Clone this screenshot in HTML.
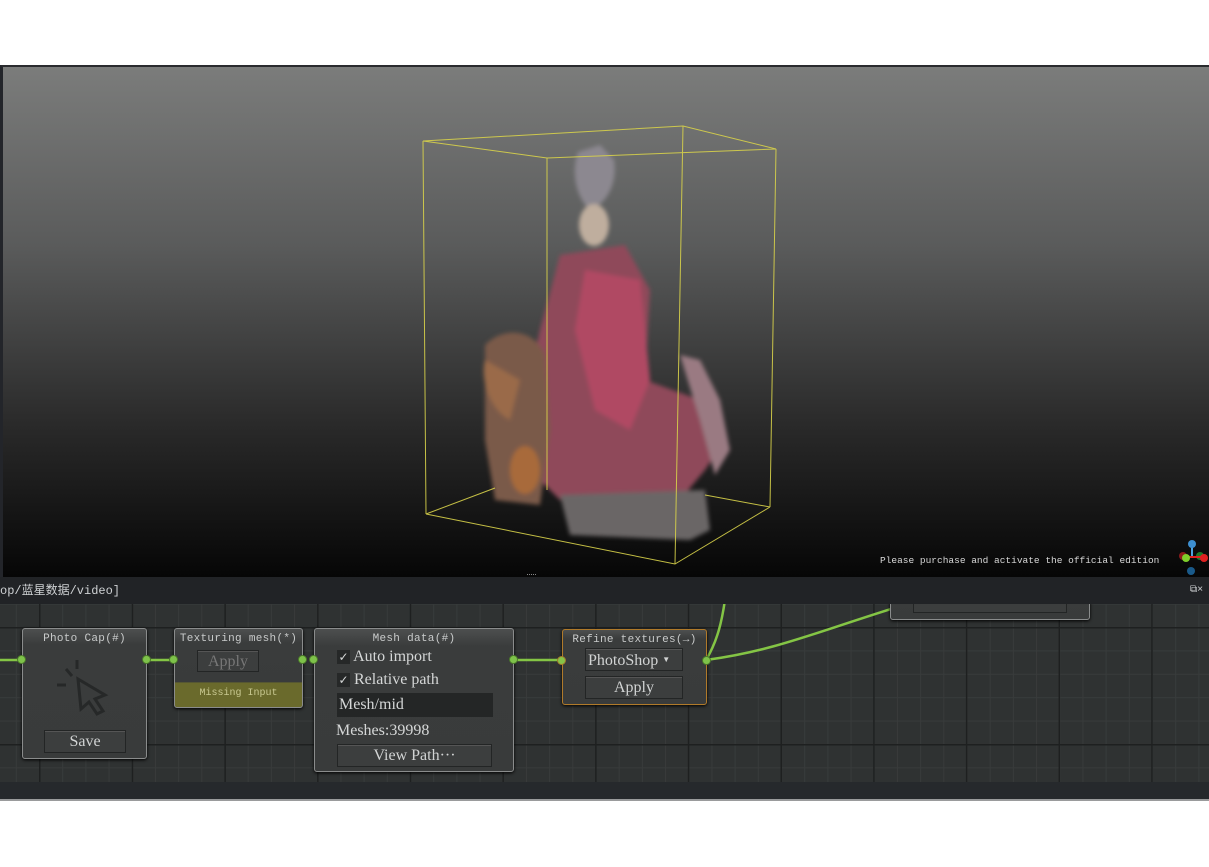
<!DOCTYPE html>
<html><head><meta charset="utf-8"><style>
*{margin:0;padding:0;box-sizing:border-box}
body{width:1209px;height:867px;background:#fff;position:relative;overflow:hidden;font-family:"Liberation Mono","Noto Sans CJK SC",monospace}
#vp{position:absolute;left:0;top:65px;width:1209px;height:512px;background:linear-gradient(#7b7c7b 0%,#5a5b5b 35%,#2a2a2a 70%,#060606 100%);border-top:2px solid #2a2b2e;border-left:3px solid #23252a}
#grid{position:absolute;left:0;top:604px;width:1209px;height:178px;background-color:#2f3232;
background-image:linear-gradient(90deg,#1e2020 1.5px,transparent 1.5px),linear-gradient(#1e2020 1.5px,transparent 1.5px),linear-gradient(90deg,#383b3b 1px,transparent 1px),linear-gradient(#383b3b 1px,transparent 1px);
background-size:92.7px 117px,92.7px 117px,23.2px 23.4px,23.2px 23.4px;background-position:39px 23px,39px 23px,39px 23px,39px 23px}
#bot{position:absolute;left:0;top:782px;width:1209px;height:19px;background:#26292c;border-bottom:2px solid #9a9b9c}
.node{position:absolute;background:linear-gradient(#4d4f4f,#3a3c3c 12%,#393b3b);border:1px solid #8a8c8c;border-radius:3px;box-shadow:0 1px 3px #000;color:#c9cbcb}
.t{font-size:11px;text-align:center;letter-spacing:0.3px;margin-top:4px;white-space:nowrap}
.btn{position:absolute;background:#3c3e3e;border:1px solid #232525;box-shadow:inset 0 1px 0 #555;color:#d2d4d4;font-family:"Liberation Serif",serif;text-align:center;white-space:nowrap}
.dot{position:absolute;width:9px;height:9px;border-radius:50%;background:#7ec24a;border:1px solid #4b7a2a}
.ser{font-family:"Liberation Serif",serif;color:#d5d7d7;position:absolute;font-size:16px;white-space:nowrap}
</style></head><body>
<div id="vp"></div>
<svg style="position:absolute;left:0;top:0" width="1209" height="580">
<defs><filter id="b"><feGaussianBlur stdDeviation="2"/></filter></defs>
<g filter="url(#b)">
<path d="M578,152 C570,175 578,200 590,210 C605,205 618,185 614,160 L600,145 Z" fill="#8c8890"/>
<ellipse cx="594" cy="225" rx="15" ry="21" fill="#bfae9e"/>
<path d="M560,255 L625,245 L650,290 L645,380 L700,400 L725,440 L705,470 L680,500 L620,505 L560,500 L530,470 L520,420 L540,330 Z" fill="#8f4a5a"/>
<path d="M585,270 L640,280 L650,380 L630,430 L595,410 L575,330 Z" fill="#b04863"/>
<path d="M485,345 C505,325 535,330 545,355 L550,430 L540,505 L495,500 L485,440 Z" fill="#7a5a48"/>
<path d="M485,360 C480,380 490,410 510,420 L520,380 Z" fill="#9a6a4a"/>
<ellipse cx="525" cy="470" rx="15" ry="24" fill="#a86a3a"/>
<path d="M560,495 L705,490 L710,530 L690,540 L570,535 Z" fill="#6a6666"/>
<path d="M680,355 L700,360 L720,400 L730,450 L715,475 L700,420 Z" fill="#9a7a82"/>
</g>
<g stroke="#d8d24a" stroke-width="1" fill="none" opacity=".9">
<path d="M423,141 L683,126 L776,149 L547,158 Z"/>
<path d="M423,141 L426,514 M683,126 L675,564 M776,149 L770,507 M547,158 L547,490"/>
<path d="M426,514 L675,564 L770,507 M426,514 L495,488 M705,495 L770,507"/>
</g>
<text x="880" y="563" font-family="Liberation Mono,monospace" font-size="9.5" fill="#d8d8d8">Please purchase and activate the official edition</text>
<line x1="1192" y1="546" x2="1192" y2="556" stroke="#4fa3e0" stroke-width="2"/>
<circle cx="1192" cy="544" r="4" fill="#3d8fd0"/>
<circle cx="1183" cy="556" r="4" fill="#8a1c1c"/>
<circle cx="1200" cy="556" r="4" fill="#1f7a2a"/>
<line x1="1186" y1="557" x2="1205" y2="557" stroke="#e02020" stroke-width="2"/>
<circle cx="1186" cy="558" r="4" fill="#7fcf2a"/>
<circle cx="1204" cy="558" r="4" fill="#e02020"/>
<circle cx="1191" cy="571" r="4" fill="#1a5a8a"/>
</svg>
<div style="position:absolute;left:527px;top:574px;width:9px;height:1px;border-top:1px dotted #888"></div>
<div id="grid"></div>
<div id="bot"></div>
<svg style="position:absolute;left:0;top:600px" width="1209" height="90">
<g stroke="#84c545" stroke-width="2.5" fill="none">
<path d="M0,60 L22,60 M146,60 L174,60 M513,60 L566,60"/>
<path d="M706,60 C780,50 820,30 920,0"/>
<path d="M706,60 C718,40 722,20 725,0"/>
</g></svg>
<div class="node" style="left:890px;top:590px;width:200px;height:30px"><div class="btn" style="left:22px;top:2px;width:154px;height:20px;font-size:14px;line-height:14px;color:#aaa">View Path</div></div>
<div style="position:absolute;left:0;top:577px;width:1209px;height:27px;background:#212326;color:#cfd2d4;font-size:12px;line-height:28px;z-index:1;white-space:nowrap">op/蓝星数据/video]<span style="position:absolute;left:1190px;top:0;font-size:10px;white-space:nowrap">⧉×</span></div>

<div class="node" style="left:22px;top:628px;width:125px;height:131px"><div class="t">Photo Cap(#)</div>
<svg style="position:absolute;left:30px;top:28px" width="60" height="60"><g stroke="#262828" stroke-width="3" fill="none"><path d="M25,22 L52,38 L42,42 L50,54 L44,57 L36,45 L28,52 Z"/><path d="M13,12 L19,19 M4,28 L13,28 M24,3 L24,12"/></g></svg>
<div class="btn" style="left:21px;top:101px;width:82px;height:23px;font-size:16px;line-height:22px">Save</div></div>
<div class="dot" style="left:17px;top:655px"></div><div class="dot" style="left:142px;top:655px"></div>

<div class="node" style="left:174px;top:628px;width:129px;height:80px;background:linear-gradient(#4d4f4f,#3a3c3c 18%,#393b3b 68%,#6a6a2c 69%,#6a6a2c)"><div class="t">Texturing mesh(*)</div>
<div class="btn" style="left:22px;top:21px;width:62px;height:22px;font-size:16px;line-height:21px;color:#777">Apply</div>
<div style="position:absolute;left:0;top:59px;width:127px;font-size:10px;text-align:center;color:#c8c890">Missing Input</div></div>
<div class="dot" style="left:169px;top:655px"></div><div class="dot" style="left:298px;top:655px"></div>

<div class="node" style="left:314px;top:628px;width:200px;height:144px"><div class="t">Mesh data(#)</div>
<div class="ser" style="left:22px;top:19px"><span style="display:inline-block;width:13px;height:14px;background:#262828;font-size:12px;line-height:14px;text-align:center">✓</span> Auto import</div>
<div class="ser" style="left:22px;top:42px"><span style="display:inline-block;width:13px;height:14px;background:#262828;font-size:12px;line-height:14px;text-align:center">✓</span> Relative path</div>
<div style="position:absolute;left:22px;top:64px;width:156px;height:24px;background:#242626"></div>
<div class="ser" style="left:24px;top:67px">Mesh/mid</div>
<div class="ser" style="left:21px;top:93px">Meshes:39998</div>
<div class="btn" style="left:22px;top:115px;width:155px;height:23px;font-size:16px;line-height:22px">View Path···</div></div>
<div class="dot" style="left:309px;top:655px"></div><div class="dot" style="left:509px;top:655px"></div>

<div class="node" style="left:562px;top:629px;width:145px;height:76px;border-color:#b07a2a"><div class="t">Refine textures(→)</div>
<div class="btn" style="left:22px;top:18px;width:98px;height:23px;font-size:16px;line-height:22px;text-align:left;padding-left:2px">PhotoShop <span style="font-size:8px;vertical-align:3px">▼</span></div>
<div class="btn" style="left:22px;top:46px;width:98px;height:23px;font-size:16px;line-height:22px">Apply</div></div>
<div class="dot" style="left:557px;top:656px;background:#86c248;border-color:#a07a2a"></div><div class="dot" style="left:702px;top:656px"></div>
</body></html>
